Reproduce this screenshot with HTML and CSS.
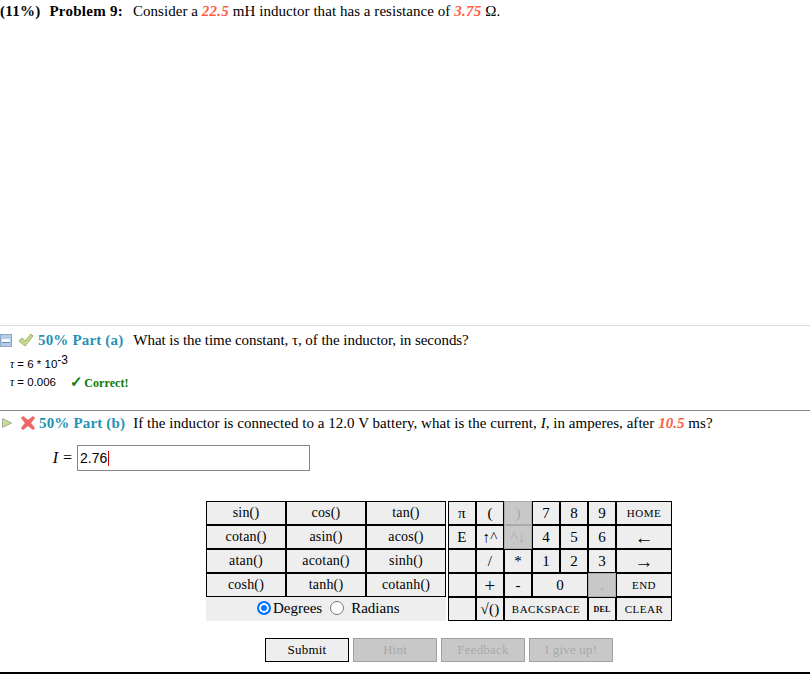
FILE: index.html
```html
<!DOCTYPE html>
<html lang="en">
<head>
<meta charset="utf-8">
<title>Problem 9</title>
<link rel="stylesheet" href="styles.css">
</head>
<body>
<div class="page">
  <section class="problem">
    <p class="statement"><b class="score">(11%)</b><b class="pnum">Problem 9:</b>Consider a <b class="val">22.5</b> mH inductor that has a resistance of <b class="val">3.75</b> Ω.</p>
  </section>
  <section class="part part-a">
    <div class="part-head">
      <svg class="ico-toggle" viewBox="0 0 12 13"><rect x="0.5" y="0.5" width="11" height="12" fill="#b4cbe6" stroke="#8fa9c8"/><rect x="2" y="5" width="8" height="3" fill="#fff"/><path d="M2 8.5h8" stroke="#5f8dbd"/></svg>
      <svg class="ico-status" viewBox="0 0 16 14"><path d="M1 8l3-3 3 3 6-7 2 2-8 10z" fill="#c4d88c" stroke="#9fb36c" stroke-width="1"/></svg>
      <b class="part-label">50% Part (a)</b>
      <span class="part-q">What is the time constant, τ, of the inductor, in seconds?</span>
    </div>
    <div class="work work-first"><i class="tau">τ</i> = 6 * 10<sup>-3</sup></div>
    <div class="work work-result"><span><i class="tau">τ</i> = 0.006</span><b class="ok"><span class="tick">✓</span>Correct!</b></div>
  </section>
  <section class="part part-b">
    <div class="part-head">
      <svg class="ico-toggle-b" viewBox="0 0 12 12"><path d="M1.5 1.5l9 4.5-9 4.5z" fill="#c4de8c" stroke="#a4b0a0"/></svg>
      <svg class="ico-status-b" viewBox="0 0 14 14"><path d="M2 0l5 4 5-4 2 2-4 5 4 5-2 2-5-4-5 4-2-2 4-5-4-5z" fill="#ee6666" stroke="#e8a0a0" stroke-width=".5"/></svg>
      <b class="part-label">50% Part (b)</b>
      <span class="part-q">If the inductor is connected to a 12.0 V battery, what is the current, <i>I</i>, in amperes, after <b class="val">10.5</b> ms?</span>
    </div>
    <div class="answer"><span class="answer-label"><i>I</i><span class="eq">=</span></span><div class="answer-box">2.76<span class="caret"></span></div></div>
    <div class="keypad">
      <div class="funcs">
        <button>sin()</button><button>cos()</button><button>tan()</button>
        <button>cotan()</button><button>asin()</button><button>acos()</button>
        <button>atan()</button><button>acotan()</button><button>sinh()</button>
        <button>cosh()</button><button>tanh()</button><button>cotanh()</button>
        <div class="modes"><span class="radio on"></span><span class="mode">Degrees</span><span class="radio"></span><span class="mode mode-last">Radians</span></div>
      </div>
      <div class="keys">
        <button>π</button><button>(</button><button class="off">)</button><button>7</button><button>8</button><button>9</button><button class="word">HOME</button>
        <button>E</button><button>↑^</button><button class="off">^↓</button><button>4</button><button>5</button><button>6</button><button class="big">←</button>
        <button></button><button>/</button><button>*</button><button>1</button><button>2</button><button>3</button><button class="big">→</button>
        <button></button><button class="big">+</button><button>-</button><button class="two">0</button><button class="off">.</button><button class="word">END</button>
        <button></button><button>√()</button><button class="three word">BACKSPACE</button><button class="del">DEL</button><button class="word">CLEAR</button>
      </div>
    </div>
    <div class="actions">
      <button class="submit">Submit</button><button class="dis">Hint</button><button class="dis">Feedback</button><button class="dis">I give up!</button>
    </div>
  </section>
</div>
</body>
</html>
```
FILE: styles.css
```css
* { box-sizing: border-box; }
html, body { margin: 0; padding: 0; background: #fff; }
body { font-family: "Liberation Serif", "Times New Roman", serif; font-size: 15px; color: #000; overflow: hidden; }
.page { width: 810px; height: 674px; border-bottom: 2px solid #000; }
.problem { height: 325px; }
.statement { margin: 0; padding-top: 2px; line-height: 18px; font-size: 15px; letter-spacing: .05px; white-space: nowrap; }
.statement b { letter-spacing: .25px; }
.score { margin-right: 9px; }
.pnum { margin-right: 10px; }
.val { color: #ff5c40; font-style: italic; }
.part { border-top: 1px solid #ddd; }
.part-a { height: 85px; }
.part-b { border-top-color: #888; }
.part-head { display: flex; align-items: center; height: 24px; white-space: nowrap; }
.part-a .part-head { margin-top: 2px; }
.ico-toggle { width: 12px; height: 13px; margin-right: 6px; flex: none; }
.ico-status { width: 16px; height: 14px; margin-right: 4px; flex: none; }
.ico-toggle-b { width: 12px; height: 12px; margin: 0 8px 0 1px; flex: none; }
.ico-status-b { width: 14px; height: 14px; margin-right: 4px; flex: none; }
.part-label { color: #1f93b4; font-size: 15px; margin-right: 8px; letter-spacing: .17px; }
.part-q { font-size: 15px; letter-spacing: .04px; }
.part-a .part-label { margin-right: 10px; }
.part-a .part-q { letter-spacing: -.05px; }
.work { font-family: "Liberation Sans", Arial, sans-serif; font-size: 11.5px; height: 18px; line-height: 18px; padding-left: 10px; }
.work-first { margin-top: 3px; }
.work sup { font-size: 12px; line-height: 0; vertical-align: 4px; }
.tau { font-family: "Liberation Serif", serif; }
.work-result { display: flex; gap: 14px; }
.ok { color: #0a7a0a; font-family: "Liberation Serif", serif; font-size: 12px; letter-spacing: .1px; }
.tick { font-size: 15px; margin-right: 1px; }
.answer { display: flex; align-items: center; margin-top: 10px; height: 26px; }
.answer-label { width: 77px; padding-right: 5px; display: flex; justify-content: flex-end; gap: 3px; font-size: 16px; }
.eq { padding-left: 2px; }
.answer-box { width: 233px; height: 26px; border: 1px solid #888; padding-left: 2px; font-family: "Liberation Sans", Arial, sans-serif; font-size: 14px; line-height: 24px; display: flex; align-items: center; }
.caret { width: 1px; height: 15px; background: #c00; margin-left: 1px; }
.keypad { display: flex; margin: 30px 0 0 206px; gap: 2px; }
.funcs { display: grid; grid-template-columns: repeat(3, 80px); grid-auto-rows: 24px; }
.keys { display: grid; grid-template-columns: repeat(6, 28px) 56px; grid-auto-rows: 24px; }
.keypad button { margin: 0; padding: 0; border: 1px solid #000; background: #eee; font-family: "Liberation Serif", serif; font-size: 14px; color: #000; letter-spacing: .2px; }
.keys button { font-size: 15px; }
.keypad .big { font-size: 19px; line-height: 1; }
.modes { grid-column: 1 / -1; background: #eee; display: flex; align-items: center; padding-left: 51px; font-size: 15px; padding-bottom: 2px; }
.radio { width: 14px; height: 14px; border-radius: 50%; border: 1px solid #777; background: #fff; flex: none; }
.radio.on { border: 2px solid #0075ff; background: #0075ff; box-shadow: inset 0 0 0 2px #fff; }
.mode { margin: 0 8px 0 2px; }
.mode-last { margin-left: 7px; }
.keypad .off { background: #c8c8c8; color: #aaa; border-color: #aaa; }
.keypad .two { grid-column: span 2; }
.keypad .three { grid-column: span 3; }
.keypad .word { font-size: 11px; letter-spacing: .5px; }
.keypad .del { font-size: 8px; font-weight: bold; }
.actions { display: flex; gap: 4px; margin: 17px 0 0 265px; }
.actions button { width: 84px; height: 24px; margin: 0; padding: 0; font-family: "Liberation Serif", serif; font-size: 13px; letter-spacing: .2px; }
.submit { background: #eee; border: 1px solid #000; color: #000; }
.dis { background: #c8c8c8; border: 1px solid #a0a0a0; color: #a8a8a8; }
```
